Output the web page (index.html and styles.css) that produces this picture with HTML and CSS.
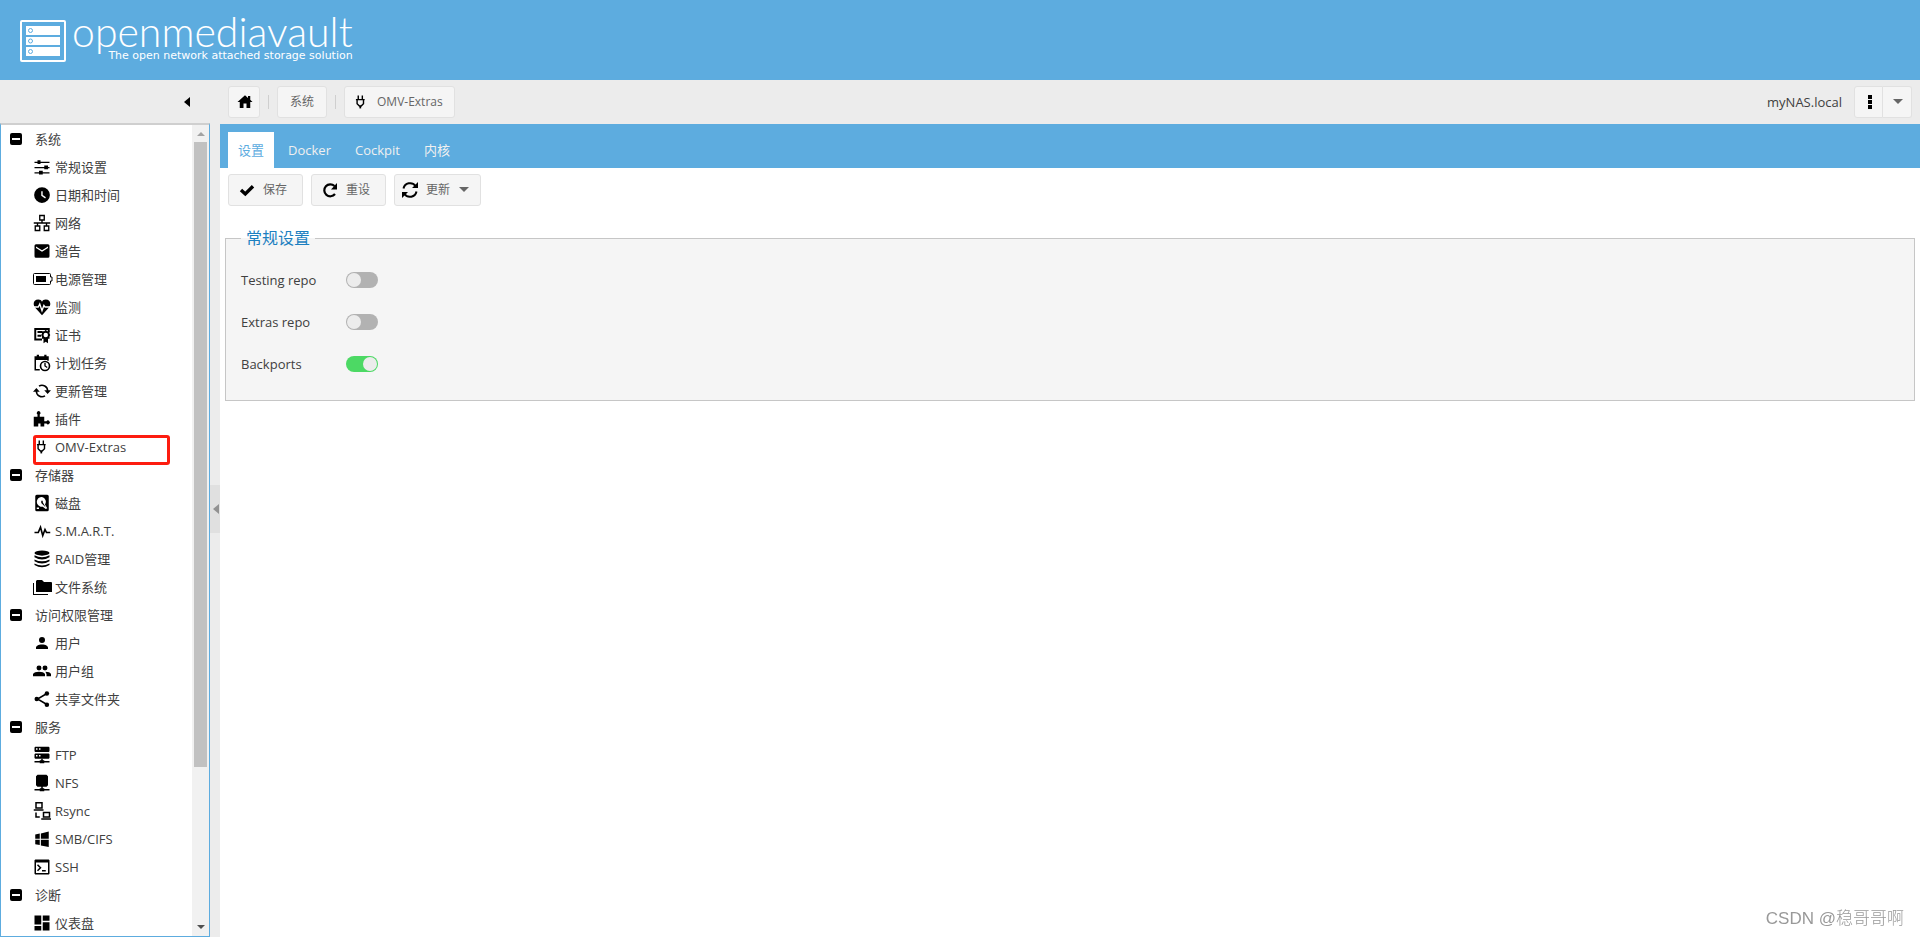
FILE: index.html
```
<!DOCTYPE html>
<html lang="zh-CN">
  <head>
    <meta charset="utf-8" />
    <title>openmediavault</title>
    <link rel="stylesheet" href="styles.css">
  </head>
  <body>
    <svg class="sprite" aria-hidden="true">
      <symbol id="i-minus" viewBox="0 0 12 12"><rect width="12" height="12" rx="2"/><rect x="2" y="5" width="8" height="2" fill="#fff"/></symbol>
      <symbol id="i-home" viewBox="0 0 24 24"><path d="M10 20V14H14V20H19V12H22L19 9V4H16V6.5L12 3L2 12H5V20Z"/></symbol>
      <symbol id="i-sliders" viewBox="0 0 24 24"><path d="M2 5h20v1.500H2zM2 12h20v1.500H2zM2 19h20v1.500H2z"/><path d="M6 3h4v5H6zM15 10h5v5h-5zM8 17h5v5H8z"/></symbol>
      <symbol id="i-clock" viewBox="0 0 24 24"><path fill-rule="evenodd" d="M12 1.500A10.500 10.500 0 0 0 1.500 12A10.500 10.500 0 0 0 12 22.500A10.500 10.500 0 0 0 22.500 12A10.500 10.500 0 0 0 12 1.500M16.2 16.6L11 13V7H12.9V12L17.2 14.9Z"/></symbol>
      <symbol id="i-network" viewBox="0 0 24 24"><path fill="none" stroke="#000" stroke-width="1.800" d="M9 2h6v6H9zM3 16h6v6H3zM15 16h6v6h-6zM12 8v4M1 12h22M6 12v4M18 12v4"/></symbol>
      <symbol id="i-mail" viewBox="0 0 24 24"><path fill-rule="evenodd" d="M20 8L12 13L4 8V6L12 11L20 6M20 3H4A2 2 0 0 0 2 5V19A2 2 0 0 0 4 21H20A2 2 0 0 0 22 19V5A2 2 0 0 0 20 3Z"/></symbol>
      <symbol id="i-battery" viewBox="0 0 20 18"><path fill="none" stroke="#000" d="M1.500 3.500h15a1 1 0 0 1 1 1V7h1.500v4h-1.500v2.500a1 1 0 0 1-1 1h-15a1 1 0 0 1-1-1v-9a1 1 0 0 1 1-1z"/><path d="M3 6h10v6H3z"/></symbol>
      <symbol id="i-heart" viewBox="0 0 24 24"><path d="M12 23L3 13C-1 8 1 2 7 2C10 2 11 3 12 5C13 3 14 2 17 2C23 2 25 8 21 13Z"/><path fill="none" stroke="#fff" stroke-width="1.800" d="M1 12h6l2-4 3 9 2.500-7 1.500 2h7"/></symbol>
      <symbol id="i-cert" viewBox="0 0 24 24"><path fill="none" stroke="#000" stroke-width="2.600" d="M12 18H3V4h18v4M6 8h6M6 13h5"/><path fill-rule="evenodd" d="M17 5l2 2 3 0v3l1 2-1 2v3h-2v6l-3-2-3 2v-6h-2v-3l-1-2 1-2V7h3zM17 9a3 3 0 1 0 0 6 3 3 0 0 0 0-6z"/></symbol>
      <symbol id="i-calendar" viewBox="0 0 24 24"><path d="M2 3h3V1h3v2h7V1h3v2h3v6h-2V8H4v12h5v2H2z"/><circle cx="16" cy="16" r="6" fill="#fff" stroke="#000" stroke-width="2.200"/><path fill="none" stroke="#000" stroke-width="1.800" d="M16 12v4l3 2"/></symbol>
      <symbol id="i-update" viewBox="0 0 24 24"><path fill="none" stroke="#000" stroke-width="2" d="M8 5.500A7.500 7.500 0 0 1 19.500 12M16 18.500A7.500 7.500 0 0 1 4.500 12"/><path d="M0 13h9l-4.500-5zM15 11h9l-4.500 5z"/></symbol>
      <symbol id="i-plugin" viewBox="0 0 24 24"><path d="M1 9h5V6a2.500 2.500 0 1 1 3 0v3h6v6h3a2.500 2.500 0 1 1 0 3h-3v4h-5v-4H7v4H1z"/></symbol>
      <symbol id="i-plug" viewBox="0 0 24 24"><path fill="none" stroke="#000" stroke-width="2.400" d="M9 1v6M16 1v6M5 8h15M7 8v7l4 4h3l4-4V8"/><path d="M11 18h3v5h-3z"/></symbol>
      <symbol id="i-disk" viewBox="0 0 24 24"><path fill-rule="evenodd" d="M5 1H19A2 2 0 0 1 21 3V21A2 2 0 0 1 19 23H5A2 2 0 0 1 3 21V3A2 2 0 0 1 5 1M12 4a6.500 6.500 0 0 0-5 11l3 2 3 0 4 3 2-1-3-5A6.500 6.500 0 0 0 12 4M5 18v2h3v-2z"/><path d="M11 9h2v2l4 7-6-6z"/></symbol>
      <symbol id="i-pulse" viewBox="0 0 24 24"><path fill="none" stroke="#000" stroke-width="2.200" d="M2 14h5l3-7 3 11 3-8 2 4h5"/></symbol>
      <symbol id="i-database" viewBox="0 0 24 24"><ellipse cx="12" cy="4" rx="10" ry="3.500"/><path d="M2 7q10 5 20 0v2.500q-10 6-20 0zM2 12.500q10 5 20 0V15q-10 6-20 0zM2 18q10 5 20 0v2q-10 6-20 0z"/></symbol>
      <symbol id="i-folders" viewBox="0 0 20 18"><path d="M4 2h5l2 2h7a1 1 0 0 1 1 1v9H3V3z"/><path d="M0 5h1v11h14v1H0z"/></symbol>
      <symbol id="i-user" viewBox="0 0 24 24"><path d="M12 4A4 4 0 0 1 16 8A4 4 0 0 1 12 12A4 4 0 0 1 8 8A4 4 0 0 1 12 4M12 14C17 14 20 16 20 18V20H4V18C4 16 7 14 12 14Z"/></symbol>
      <symbol id="i-users" viewBox="0 0 24 24"><circle cx="8" cy="8" r="3.300"/><circle cx="16" cy="8" r="3.300"/><path d="M0 19v-3q2-3 8-3t8 3v3zM16.500 13q6 0 7.500 3v3h-6v-3z"/></symbol>
      <symbol id="i-share" viewBox="0 0 24 24"><path fill="none" stroke="#000" stroke-width="2" d="M18 5L6 12l12 7"/><circle cx="18.500" cy="4.500" r="3"/><circle cx="5" cy="12" r="3"/><circle cx="18.500" cy="19.500" r="3"/></symbol>
      <symbol id="i-server" viewBox="0 0 24 24"><path fill-rule="evenodd" d="M3 1h18l1 1v5l-1 1H3L2 7V2zM4 3v2h2V3zM8 3v2h2V3zM3 10h18l1 1v5l-1 1H3l-1-1v-5zM4 12v2h2v-2zM8 12v2h2v-2z"/><path d="M11 17h2v2h2v1h7v2h-7v1H9v-1H2v-2h7v-1h2z"/></symbol>
      <symbol id="i-nas" viewBox="0 0 24 24"><path d="M6 1h12l2 2v12l-2 2h-5v2h2v1h7v2h-7v1H9v-1H2v-2h7v-1h2v-2H6l-2-2V3z"/></symbol>
      <symbol id="i-rsync" viewBox="0 0 24 24"><path fill="none" stroke="#000" stroke-width="2" d="M4 1h8v7H4zM1 10.500h13M14 14h8v6h-8zM11 22.500h13M4 14v6h5"/></symbol>
      <symbol id="i-windows" viewBox="0 0 24 24"><path d="M3 6l6-1.200v6.700H3zM10.500 4.500L21 2v9.500H10.500zM3 13h6v7l-6-1zM10.500 13H21v9.500l-10.500-2z"/></symbol>
      <symbol id="i-terminal" viewBox="0 0 24 24"><path fill-rule="evenodd" d="M3 2h18l1 1v18l-1 1H3l-1-1V3zM4 6v14h16V6z"/><path fill="none" stroke="#000" stroke-width="2" d="M6 9l4 4-4 4M12 17h5"/></symbol>
      <symbol id="i-dashboard" viewBox="0 0 24 24"><path d="M13 2V9H22V2M13 22H22V11H13M2 22H11V16H2M2 14H11V2H2V14Z"/></symbol>
      <symbol id="i-check" viewBox="0 0 16 16"><path fill="none" stroke="#000" stroke-width="3.400" d="M2 8l4.300 4L14 4.300"/></symbol>
      <symbol id="i-reset" viewBox="0 0 16 16"><path fill="none" stroke="#000" stroke-width="2.200" d="M13 12A6 6 0 1 1 12.500 4"/><path d="M15 1v6.500H9z"/></symbol>
      <symbol id="i-refresh" viewBox="0 0 16 16"><path fill="none" stroke="#000" stroke-width="2" d="M1.500 6.500A6.700 6.700 0 0 1 13.500 4M14.500 9.500A6.700 6.700 0 0 1 2.500 12"/><path d="M16 0v6h-6zM0 16v-6h6z"/></symbol>
      <symbol id="i-dots" viewBox="0 0 4 14"><path d="M0 0h4v4H0zM0 5h4v4H0zM0 10h4v4H0z"/></symbol>
      <symbol id="i-caret" viewBox="0 0 10 6"><path d="M0 0h10L5 5z"/></symbol>
      <symbol id="i-left" viewBox="0 0 6 10"><path d="M6 0v10L0 5z"/></symbol>
    </svg>

    <header class="header">
      <a class="logo" href="#">
        <svg class="logo-mark" viewBox="0 0 46 42">
          <rect x="1" y="1" width="44" height="40" rx="1" fill="none" stroke="#fff" stroke-width="2"/>
          <path fill="#fff" d="M6 6h34v9H6zM6 17h34v8H6zM6 27h34v9H6z"/>
          <g fill="none" stroke="#5dacdf"><circle cx="10.500" cy="10.500" r="2"/><circle cx="10.500" cy="21" r="2"/><circle cx="10.500" cy="31.500" r="2"/></g>
        </svg>
        <span class="logo-text">
          <span class="logo-name">openmediavault</span>
          <span class="logo-tag">The open network attached storage solution</span>
        </span>
      </a>
    </header>

    <div class="workspace">
      <aside class="sidebar">
        <div class="sidebar-head">
          <button type="button" class="collapse" aria-label="收起"><svg width="6" height="10"><use href="#i-left"/></svg></button>
        </div>
        <div class="tree-panel">
          <nav class="tree">
            <div class="group"><button type="button" aria-label="系统"><svg><use href="#i-minus"/></svg></button>系统</div>
            <a class="item" href="#"><svg><use href="#i-sliders"/></svg>常规设置</a>
            <a class="item" href="#"><svg><use href="#i-clock"/></svg>日期和时间</a>
            <a class="item" href="#"><svg><use href="#i-network"/></svg>网络</a>
            <a class="item" href="#"><svg><use href="#i-mail"/></svg>通告</a>
            <a class="item" href="#"><svg class="wide"><use href="#i-battery"/></svg>电源管理</a>
            <a class="item" href="#"><svg><use href="#i-heart"/></svg>监测</a>
            <a class="item" href="#"><svg><use href="#i-cert"/></svg>证书</a>
            <a class="item" href="#"><svg><use href="#i-calendar"/></svg>计划任务</a>
            <a class="item" href="#"><svg><use href="#i-update"/></svg>更新管理</a>
            <a class="item" href="#"><svg><use href="#i-plugin"/></svg>插件</a>
            <a class="item marked" href="#"><svg class="small"><use href="#i-plug"/></svg>OMV-Extras</a>
            <div class="group"><button type="button" aria-label="存储器"><svg><use href="#i-minus"/></svg></button>存储器</div>
            <a class="item" href="#"><svg><use href="#i-disk"/></svg>磁盘</a>
            <a class="item" href="#"><svg><use href="#i-pulse"/></svg>S.M.A.R.T.</a>
            <a class="item" href="#"><svg><use href="#i-database"/></svg>RAID管理</a>
            <a class="item" href="#"><svg class="wide"><use href="#i-folders"/></svg>文件系统</a>
            <div class="group"><button type="button" aria-label="访问权限管理"><svg><use href="#i-minus"/></svg></button>访问权限管理</div>
            <a class="item" href="#"><svg><use href="#i-user"/></svg>用户</a>
            <a class="item" href="#"><svg><use href="#i-users"/></svg>用户组</a>
            <a class="item" href="#"><svg><use href="#i-share"/></svg>共享文件夹</a>
            <div class="group"><button type="button" aria-label="服务"><svg><use href="#i-minus"/></svg></button>服务</div>
            <a class="item" href="#"><svg><use href="#i-server"/></svg>FTP</a>
            <a class="item" href="#"><svg><use href="#i-nas"/></svg>NFS</a>
            <a class="item" href="#"><svg><use href="#i-rsync"/></svg>Rsync</a>
            <a class="item" href="#"><svg><use href="#i-windows"/></svg>SMB/CIFS</a>
            <a class="item" href="#"><svg><use href="#i-terminal"/></svg>SSH</a>
            <div class="group"><button type="button" aria-label="诊断"><svg><use href="#i-minus"/></svg></button>诊断</div>
            <a class="item" href="#"><svg><use href="#i-dashboard"/></svg>仪表盘</a>
          </nav>
          <div class="scrollbar">
            <svg class="arrow up" width="8" height="4" viewBox="0 0 8 4"><path d="M4 0l4 4H0z"/></svg>
            <div class="scroll-track"><div class="thumb"></div></div>
            <svg class="arrow" width="8" height="4" viewBox="0 0 8 4"><path d="M0 0h8L4 4z"/></svg>
          </div>
        </div>
      </aside>

      <div class="splitter">
        <button type="button" aria-label="收起侧栏"><svg width="6" height="10"><use href="#i-left"/></svg></button>
      </div>

      <main class="main">
        <div class="crumbs">
          <button type="button" class="btn home" aria-label="首页"><svg width="18" height="18"><use href="#i-home"/></svg></button>
          <span class="sep"></span>
          <button type="button" class="btn crumb">系统</button>
          <span class="sep"></span>
          <button type="button" class="btn crumb-icon"><svg width="14" height="14"><use href="#i-plug"/></svg>OMV-Extras</button>
          <span class="host">myNAS.local</span>
          <div class="split">
            <button type="button" class="btn" aria-label="菜单"><svg width="4" height="14"><use href="#i-dots"/></svg></button>
            <button type="button" class="btn" aria-label="展开"><svg class="caret"><use href="#i-caret"/></svg></button>
          </div>
        </div>

        <nav class="tabs">
          <a class="tab active" href="#">设置</a>
          <a class="tab" href="#">Docker</a>
          <a class="tab" href="#">Cockpit</a>
          <a class="tab" href="#">内核</a>
        </nav>

        <div class="toolbar">
          <button type="button" class="btn tool"><svg width="16" height="16"><use href="#i-check"/></svg>保存</button>
          <button type="button" class="btn tool"><svg width="16" height="16"><use href="#i-reset"/></svg>重设</button>
          <button type="button" class="btn tool menu"><svg width="16" height="16"><use href="#i-refresh"/></svg>更新<svg class="caret"><use href="#i-caret"/></svg></button>
        </div>

        <form>
          <fieldset class="settings">
            <legend>常规设置</legend>
            <div class="field">
              <label for="testing">Testing repo</label>
              <input type="checkbox" id="testing" name="testing" />
            </div>
            <div class="field">
              <label for="extras">Extras repo</label>
              <input type="checkbox" id="extras" name="extras" />
            </div>
            <div class="field">
              <label for="backports">Backports</label>
              <input type="checkbox" id="backports" name="backports" checked />
            </div>
          </fieldset>
        </form>
      </main>
    </div>

    <div class="watermark">CSDN @稳哥哥啊</div>
  </body>
</html>
```
FILE: styles.css
```
*,
*::before,
*::after {
  box-sizing: border-box;
}

body {
  margin: 0;
  height: 100vh;
  display: flex;
  flex-direction: column;
  overflow: hidden;
  font-family: "Open Sans", "Noto Sans CJK SC", sans-serif;
  font-size: 13px;
  line-height: 20px;
  color: #404040;
  background: #fff;
}

a {
  color: inherit;
  text-decoration: none;
}

button {
  font: inherit;
  color: inherit;
  border: none;
  background: none;
  padding: 0;
  cursor: pointer;
}

svg {
  display: block;
  flex: none;
}

.sprite {
  position: absolute;
  width: 0;
  height: 0;
}

/* header */
.header {
  flex: none;
  height: 80px;
  padding: 16px 20px;
  background: #5dacdf;
}

.logo {
  display: inline-flex;
  gap: 6px;
  color: #fff;
}

.logo-mark {
  width: 46px;
  height: 42px;
  margin-top: 4px;
}

.logo-text {
  display: flex;
  flex-direction: column;
}

.logo-name {
  font-family: Lato, sans-serif;
  font-weight: 300;
  font-size: 41px;
  line-height: 32px;
}

.logo-tag {
  align-self: flex-end;
  margin-top: 1px;
  font-family: "DejaVu Sans", sans-serif;
  font-size: 11px;
  line-height: 13px;
}

.workspace {
  flex: 1;
  min-height: 0;
  display: flex;
}

/* sidebar */
.sidebar {
  flex: none;
  width: 210px;
  display: flex;
  flex-direction: column;
}

.sidebar-head {
  flex: none;
  height: 43px;
  padding-right: 20px;
  display: flex;
  align-items: center;
  justify-content: flex-end;
  background: #ececec;
}

.tree-panel {
  flex: 1;
  min-height: 0;
  display: flex;
  border: 1px solid #5dacdf;
  border-top: 2px solid #cfcfcf;
}

.tree {
  flex: 1;
  overflow: hidden;
}

.group,
.item {
  display: flex;
  align-items: center;
  height: 28px;
}

.group {
  padding-left: 9px;
}

.group button {
  width: 25px;
}

.group svg {
  width: 12px;
  height: 12px;
}

.item {
  padding-left: 32px;
  position: relative;
}

.item svg {
  width: 18px;
  height: 18px;
  margin-right: 4px;
}

.item .wide {
  width: 20px;
  margin-right: 2px;
}

.item .small {
  width: 14px;
  height: 14px;
  margin-left: 1px;
  margin-right: 7px;
}

/* outline round the highlighted entry */
.marked::after {
  content: "";
  position: absolute;
  z-index: 1;
  left: 32px;
  top: 2px;
  width: 137px;
  height: 30px;
  border: 3px solid #fd1d10;
  border-radius: 3px;
}

.scrollbar {
  width: 17px;
  padding: 7px 2px;
  display: flex;
  flex-direction: column;
  align-items: center;
  gap: 6px;
  background: #f1f1f1;
}

.arrow {
  fill: #505050;
}

.arrow.up {
  fill: #a3a3a3;
}

.scroll-track {
  flex: 1;
  width: 13px;
}

.thumb {
  height: 80.4%;
  background: #c1c1c1;
}

.splitter {
  flex: none;
  width: 10px;
  display: flex;
  align-items: center;
  background: #ececec;
}

.splitter button {
  width: 10px;
  height: 48px;
  padding-left: 3px;
  background: #e0e0e0;
}

.splitter svg {
  fill: #919191;
}

/* main */
.main {
  flex: 1;
  min-width: 0;
}

.crumbs {
  display: flex;
  align-items: center;
  height: 44px;
  padding: 0 8px;
  gap: 8px;
  background: #ececec;
}

.btn {
  display: flex;
  align-items: center;
  justify-content: center;
  height: 32px;
  border: 1px solid #e1e1e1;
  border-radius: 3px;
  background: #f5f5f5;
  color: #666;
  font-size: 12px;
}

.home {
  width: 32px;
  padding-left: 2px;
}

.crumb {
  padding: 0 12px;
}

.crumb-icon {
  padding: 0 11px 0 8px;
  gap: 10px;
}

.sep {
  width: 1px;
  height: 14px;
  background: #cfcfcf;
}

.host {
  margin-left: auto;
  margin-right: 4px;
}

.split {
  display: flex;
}

.split .btn {
  width: 29px;
  padding-left: 2px;
}

.split .btn:first-child {
  border-radius: 3px 0 0 3px;
}

.split .btn:last-child {
  border-left: none;
  border-radius: 0 3px 3px 0;
}

.caret {
  width: 10px;
  height: 6px;
  fill: #666;
}

.tabs {
  display: flex;
  gap: 4px;
  height: 44px;
  padding: 8px 8px 0;
  background: #5dacdf;
}

.tab {
  padding: 8px 10px;
  color: #f0f0f0;
}

.tab.active {
  background: #fff;
  color: #5dacdf;
}

.toolbar {
  display: flex;
  gap: 8px;
  padding: 6px 8px;
}

.tool {
  padding: 0 15px 0 10px;
  gap: 8px;
}

.menu {
  padding: 0 11px 0 7px;
}

.menu .caret {
  margin-left: 1px;
}

.settings {
  margin: 15px 5px 0;
  padding: 10px 10px 15px;
  border: 1px solid #c6c6c6;
  background: #f5f5f5;
}

.settings legend {
  margin-left: 5px;
  padding: 0 5px;
  font-size: 16px;
  line-height: 22px;
  color: #1b7fc0;
}

.field {
  display: flex;
  align-items: center;
  height: 42px;
  padding-left: 5px;
}

.field label {
  width: 105px;
}

.field input {
  appearance: none;
  width: 32px;
  height: 16px;
  margin: 0;
  padding: 1px;
  border-radius: 8px;
  background: #b2b2b2;
}

.field input::before {
  content: "";
  display: block;
  width: 14px;
  height: 14px;
  border-radius: 50%;
  background: #ececec;
}

.field input:checked {
  background: #4cd964;
}

.field input:checked::before {
  margin-left: auto;
}

.watermark {
  position: fixed;
  right: 16px;
  bottom: 8px;
  font-family: "Liberation Sans", "Noto Sans CJK SC", sans-serif;
  font-weight: 300;
  font-size: 17px;
  color: #999;
}
```
